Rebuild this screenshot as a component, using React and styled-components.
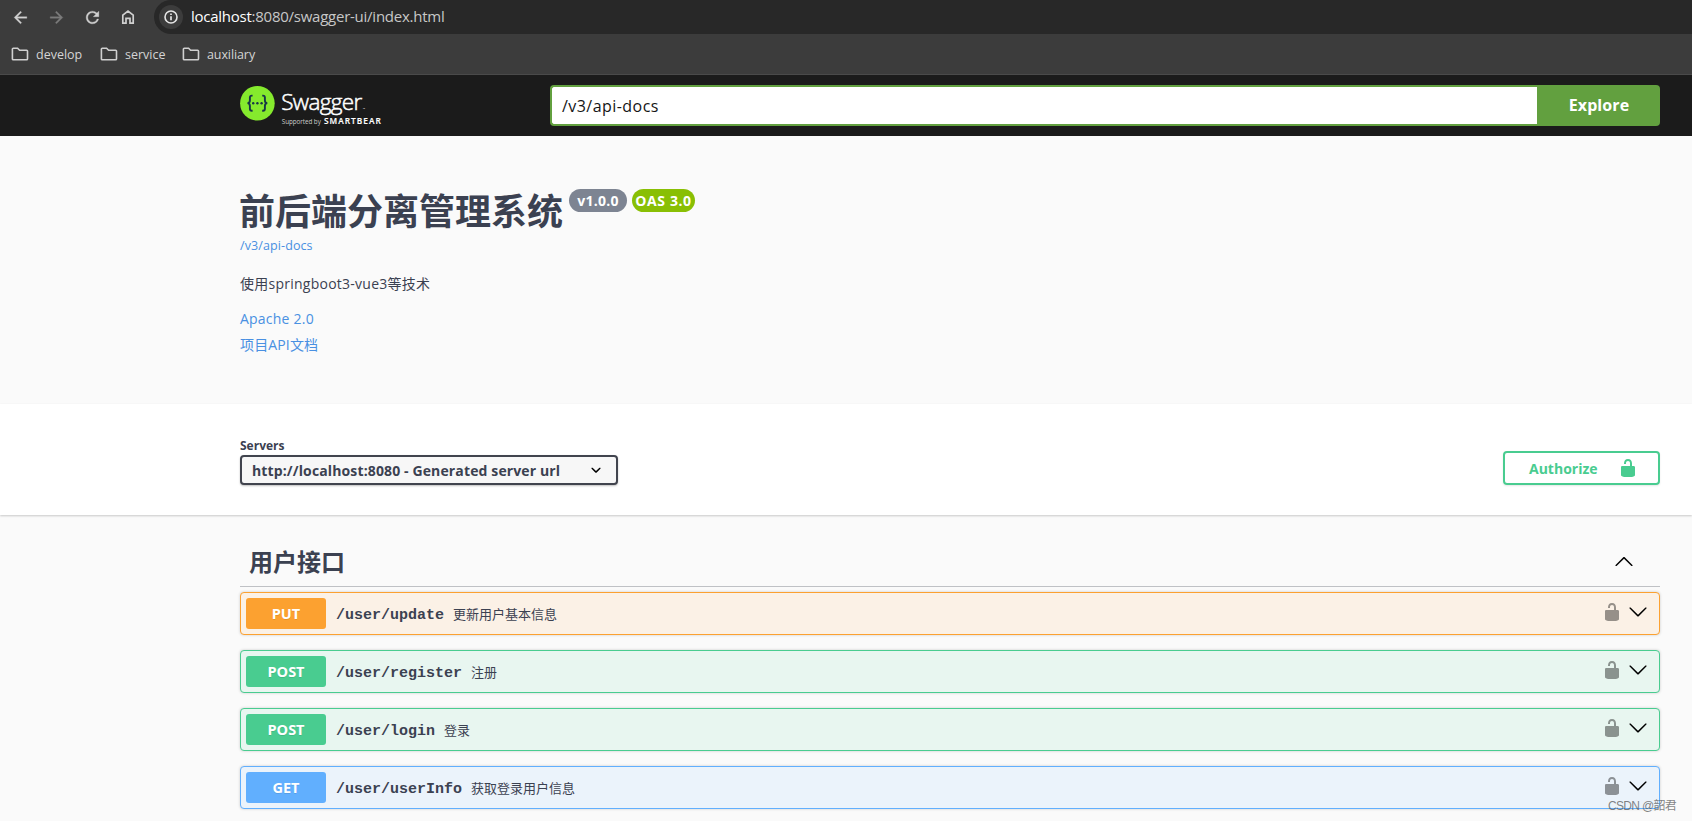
import React from "react";
import styled, { createGlobalStyle } from "styled-components";

const GlobalStyle = createGlobalStyle`
  * { box-sizing: border-box; }
  body {
    margin: 0;
    background: #fafafa;
    color: #3b4151;
    font-family: "Open Sans", "Noto Sans CJK SC", sans-serif;
    overflow: hidden;
  }
`;

const Label = styled.span`
  white-space: nowrap;
  letter-spacing: ${(p) => p.$track || 0}px;
`;

const Page = styled.div`
  position: relative;
  width: 1692px;
  height: 821px;
  overflow: hidden;
`;

/* Browser chrome */
const Browser = styled.header`
  height: 75px;
  background: #3c3c3c;
  border-bottom: 1px solid #4a4a4a;
`;
const NavBar = styled.div`
  display: flex;
  align-items: center;
  height: 34px;
  padding-left: 10px;
`;
const NavButton = styled.span`
  display: grid;
  place-items: center;
  width: 20px;
  height: 20px;
  margin-right: 16px;
  color: ${(p) => (p.$disabled ? "#7b7b7b" : "#d0d0d0")};
`;
const AddressBar = styled.div`
  display: flex;
  align-items: center;
  flex: 1;
  height: 34px;
  padding-left: 5px;
  border-radius: 17px 0 0 17px;
  background: #282828;
  color: #c7c7c7;
  font-size: 15px;
  line-height: 20px;
  b { font-weight: 400; color: #fff; }
`;
const Address = styled(Label)`
  padding-bottom: 2px;
`;
const SiteInfo = styled.span`
  display: grid;
  place-items: center;
  width: 24px;
  height: 24px;
  margin-right: 8px;
  border-radius: 50%;
  background: #3c3c3c;
`;
const Bookmarks = styled.nav`
  display: flex;
  height: 40px;
  padding-left: 11px;
`;
const Bookmark = styled.span`
  display: flex;
  align-items: center;
  gap: 7px;
  width: ${(p) => p.$w}px;
  height: 40px;
  color: #d4d4d4;
  font-size: 12.5px;
`;

/* Swagger top bar */
const Column = styled.div`
  width: 1420px;
  margin-left: 240px;
`;
const TopBar = styled.div`
  height: 61px;
  background: #1b1b1b;
`;
const TopBarInner = styled(Column)`
  display: flex;
  padding-top: 10px;
`;
const LogoLink = styled.div`
  width: 310px;
  height: 42px;
`;
const SpecInput = styled.div`
  display: flex;
  align-items: center;
  flex: 1;
  height: 41px;
  padding-left: 10px;
  border: 2px solid #62a03f;
  border-right: 0;
  border-radius: 4px 0 0 4px;
  background: #fff;
  color: #151515;
  font-size: 16px;
`;
const ExploreButton = styled.div`
  display: grid;
  place-items: center;
  width: 123px;
  height: 41px;
  padding: 0 0 2px 1px;
  border-radius: 0 4px 4px 0;
  background: #62a03f;
  color: #fff;
  font-size: 16px;
  font-weight: 700;
`;

/* Info */
const Info = styled.section`
  height: 268px;
  padding-top: 53px;
`;
const TitleRow = styled.div`
  display: flex;
  align-items: flex-start;
  height: 45px;
  margin-bottom: 2px;
`;
const Title = styled.h1`
  margin: 0 6px 0 -1px;
  font-size: 36px;
  line-height: 46px;
  font-weight: 700;
`;
const Version = styled.span`
  display: grid;
  place-items: center;
  width: ${(p) => p.$w}px;
  height: 23px;
  margin-right: 5px;
  border-radius: 12px;
  background: ${(p) => p.$bg};
  color: #fff;
  font-size: 14px;
  font-weight: 700;
`;
const InfoLine = styled.div`
  height: 20px;
  margin-bottom: ${(p) => p.$gap}px;
  line-height: 20px;
  font-size: ${(p) => p.$size || 14}px;
  color: ${(p) => (p.$link ? "#4990e2" : "#3b4151")};
`;

/* Servers */
const Scheme = styled.section`
  height: 111px;
  background: #fff;
  box-shadow: 0 1px 2px rgba(0, 0, 0, 0.2);
`;
const SchemeInner = styled(Column)`
  display: flex;
  justify-content: space-between;
  align-items: flex-end;
  height: 81px;
`;
const ServersLabel = styled.div`
  height: 16px;
  margin-bottom: 1px;
  font-size: 12px;
  line-height: 16px;
  font-weight: 700;
`;
const Select = styled.div`
  display: flex;
  align-items: center;
  justify-content: space-between;
  width: 378px;
  height: 30px;
  padding: 0 10px;
  border: 2px solid #41444e;
  border-radius: 4px;
  background: #f7f7f7;
  box-shadow: 0 1px 2px rgba(0, 0, 0, 0.25);
  font-size: 14px;
  font-weight: 700;
`;
const AuthorizeButton = styled.div`
  display: flex;
  align-items: center;
  justify-content: space-between;
  width: 157px;
  height: 34px;
  padding: 0 20px 0 24px;
  border: 2px solid #49cc90;
  border-radius: 4px;
  box-shadow: 0 1px 2px rgba(0, 0, 0, 0.1);
  color: #49cc90;
  font-size: 14px;
  font-weight: 700;
`;

/* Operations */
const TagHeader = styled.div`
  display: flex;
  align-items: center;
  justify-content: space-between;
  height: 52px;
  margin-top: 20px;
  margin-bottom: 5px;
  padding: 0 26px 0 9px;
  border-bottom: 1px solid #bfc1c5;
  color: #3b4151;
  font-size: 24px;
  font-weight: 700;
`;
const Operation = styled.div`
  display: flex;
  align-items: center;
  height: 43px;
  margin-bottom: 15px;
  padding: 0 11px 0 5px;
  border: 1px solid ${(p) => p.$color};
  border-radius: 4px;
  background: ${(p) => p.$tint};
  box-shadow: 0 0 3px rgba(0, 0, 0, 0.19);
`;
const Method = styled.span`
  display: grid;
  place-items: center;
  width: 80px;
  height: 31px;
  border-radius: 3px;
  background: ${(p) => p.$color};
  color: #fff;
  font-size: 14.5px;
  font-weight: 700;
  text-shadow: 0 1px 0 rgba(0, 0, 0, 0.1);
`;
const Path = styled.span`
  padding: 3px 9px 0 10px;
  font-family: "Liberation Mono", monospace;
  font-size: 15px;
  font-weight: 700;
`;
const Summary = styled.span`
  flex: 1;
  font-size: 13px;
`;
const RowIcons = styled.span`
  display: flex;
  align-items: center;
  gap: 6px;
  padding-bottom: 3px;
`;
const Watermark = styled.div`
  position: absolute;
  right: 16px;
  bottom: 6px;
  color: rgba(90, 90, 90, 0.75);
  font-family: "Liberation Sans", "Noto Sans CJK SC", sans-serif;
  font-size: 12px;
  letter-spacing: -0.7px;
  line-height: 18px;
`;

const Glyph = ({ size, d }) => (
  <svg width={size} height={size} viewBox="0 0 24 24" fill="currentColor" stroke="currentColor" strokeWidth=".4"><path d={d} /></svg>
);
const BACK = "M20 11H7.83l5.59-5.59L12 4l-8 8 8 8 1.41-1.41L7.83 13H20v-2z";
const FORWARD = "M12 4l-1.41 1.41L16.17 11H4v2h12.17l-5.58 5.59L12 20l8-8z";
const RELOAD = "M17.65 6.35A7.958 7.958 0 0 0 12 4c-4.42 0-7.99 3.58-7.99 8s3.57 8 7.99 8c3.73 0 6.84-2.55 7.73-6h-2.08A5.99 5.99 0 0 1 12 18c-3.31 0-6-2.69-6-6s2.69-6 6-6c1.66 0 3.14.69 4.22 1.78L13 11h7V4l-2.35 2.35z";

const HomeIcon = () => (
  <svg width="14" height="16" viewBox="0 0 14 16" fill="none" stroke="currentColor" strokeWidth="1.7">
    <path d="M1.8 6.2 7 2.1l5.2 4.1v7.9H9V9.3H5v4.8H1.8z" />
  </svg>
);
const InfoIcon = () => (
  <svg width="14" height="14" viewBox="0 0 14 14" fill="none" stroke="#e6e6e6" strokeWidth="1.6">
    <circle cx="7" cy="7" r="6" />
    <path d="M7 6.2v4M7 3.4v1.6" strokeWidth="1.7" />
  </svg>
);
const FolderIcon = () => (
  <svg width="18" height="14" viewBox="0 0 18 14" fill="none" stroke="#d0d0d0" strokeWidth="1.6">
    <path d="M1.4 11.9V2.1q0-.9.9-.9h4.3l2 2h7q.9 0 .9.9v7.8q0 .9-.9.9H2.3q-.9 0-.9-.9z" />
  </svg>
);
const LockIcon = ({ color, opacity = 1 }) => (
  <svg width="20" height="20" viewBox="0 0 20 20" fill={color} opacity={opacity}>
    <path d="M15.8 8H14V5.6C14 2.703 12.665 1 10 1 7.334 1 6 2.703 6 5.6V6h2v-.801C8 3.754 8.797 3 10 3c1.203 0 2 .754 2 2.199V8H4c-.553 0-1 .646-1 1.199V17c0 .549.428 1.139.951 1.307l1.197.387C5.672 18.861 6.55 19 7.1 19h5.8c.549 0 1.428-.139 1.951-.307l1.196-.387c.524-.167.953-.757.953-1.306V9.199C17 8.646 16.352 8 15.8 8z" />
  </svg>
);
const Chevron = ({ down }) => (
  <svg width="20" height="20" viewBox="0 0 20 20">
    <path
      transform={down ? "rotate(180 10 10.25)" : undefined}
      d="M17.418 14.908C17.69 15.176 18.127 15.176 18.397 14.908C18.667 14.64 18.668 14.207 18.397 13.939L10.489 6.109C10.219 5.841 9.782 5.841 9.51 6.109L1.602 13.939C1.332 14.207 1.332 14.64 1.602 14.908C1.873 15.176 2.311 15.176 2.581 14.908L10 7.767L17.418 14.908Z"
    />
  </svg>
);
const SelectArrow = () => (
  <svg width="20" height="20" viewBox="0 0 20 20">
    <path d="M13.418 7.859c.271-.268.709-.268.978 0 .27.268.272.701 0 .969l-3.908 3.83c-.27.268-.707.268-.979 0l-3.908-3.83c-.27-.267-.27-.701 0-.969.271-.268.709-.268.978 0L10 11l3.418-3.141z" />
  </svg>
);
const Logo = () => (
  <svg width="145" height="44" viewBox="0 0 145 44" fontFamily="Open Sans, sans-serif">
    <circle cx="17.4" cy="18.3" r="17.3" fill="#85ea2d" />
    <g fill="none" stroke="#173647" strokeWidth="1.9">
      <path d="M12.6 10.6h-.8q-1.9 0-1.9 2v2.6q0 2.8-2.4 2.9 2.4.2 2.4 2.9v2.7q0 2 1.9 2h.8" />
      <path d="M22.2 10.6h.8q1.9 0 1.9 2v2.6q0 2.8 2.4 2.9-2.4.2-2.4 2.9v2.7q0 2-1.9 2h-.8" />
    </g>
    <g fill="#173647">
      <circle cx="13.2" cy="18.2" r="1.2" />
      <circle cx="17.4" cy="18.2" r="1.2" />
      <circle cx="21.6" cy="18.2" r="1.2" />
    </g>
    <g fill="#fff">
      <text x="41.2" y="25.4" fontSize="22.5" fontWeight="300" stroke="#fff" strokeWidth=".5" textLength="81">Swagger</text>
      <text x="122.8" y="25" fontSize="3">™</text>
      <text x="41.8" y="39.2" fontSize="6.3" fill="#ccc" textLength="39">Supported by</text>
      <text x="84" y="39.4" fontSize="8.3" fontWeight="600" stroke="#fff" strokeWidth=".15" textLength="56.8" lengthAdjust="spacing">SMARTBEAR</text>
    </g>
  </svg>
);

const PUT = { color: "#fca130", tint: "#fbf1e6" };
const POST = { color: "#49cc90", tint: "#e8f6f0" };
const GET = { color: "#61affe", tint: "#ebf3fb" };
const operations = [
  { method: "PUT", theme: PUT, path: "/user/update", summary: "更新用户基本信息" },
  { method: "POST", theme: POST, path: "/user/register", summary: "注册" },
  { method: "POST", theme: POST, path: "/user/login", summary: "登录" },
  { method: "GET", theme: GET, path: "/user/userInfo", summary: "获取登录用户信息" },
];

export default function App() {
  return (
    <Page>
      <GlobalStyle />
      <Browser>
        <NavBar>
          <NavButton><Glyph size={19} d={BACK} /></NavButton>
          <NavButton $disabled><Glyph size={19} d={FORWARD} /></NavButton>
          <NavButton><Glyph size={19} d={RELOAD} /></NavButton>
          <NavButton><HomeIcon /></NavButton>
          <AddressBar>
            <SiteInfo><InfoIcon /></SiteInfo>
            <Address $track={-0.25}><b>localhost</b>:8080/swagger-ui/index.html</Address>
          </AddressBar>
        </NavBar>
        <Bookmarks>
          <Bookmark $w={89}><FolderIcon /><Label>develop</Label></Bookmark>
          <Bookmark $w={82}><FolderIcon /><Label>service</Label></Bookmark>
          <Bookmark $w={90}><FolderIcon /><Label $track={-0.1}>auxiliary</Label></Bookmark>
        </Bookmarks>
      </Browser>
      <TopBar>
        <TopBarInner>
          <LogoLink><Logo /></LogoLink>
          <SpecInput><Label $track={0.45}>/v3/api-docs</Label></SpecInput>
          <ExploreButton><Label $track={0.1}>Explore</Label></ExploreButton>
        </TopBarInner>
      </TopBar>
      <Info>
        <Column>
          <TitleRow>
            <Title>前后端分离管理系统</Title>
            <Version $w={58} $bg="#7d8492"><Label $track={0.3}>v1.0.0</Label></Version>
            <Version $w={63} $bg="#89bf04"><Label $track={0.6}>OAS 3.0</Label></Version>
          </TitleRow>
          <InfoLine $link $size={12.5} $gap={18}><Label $track={0.1}>/v3/api-docs</Label></InfoLine>
          <InfoLine $gap={15}><Label $track={0.25}>使用springboot3-vue3等技术</Label></InfoLine>
          <InfoLine $link $gap={6}><Label $track={0.22}>Apache 2.0</Label></InfoLine>
          <InfoLine $link $gap={0}><Label $track={0.15}>项目API文档</Label></InfoLine>
        </Column>
      </Info>
      <Scheme>
        <SchemeInner>
          <div>
            <ServersLabel><Label>Servers</Label></ServersLabel>
            <Select><Label $track={0.13}>http://localhost:8080 - Generated server url</Label><SelectArrow /></Select>
          </div>
          <AuthorizeButton><Label>Authorize</Label><LockIcon color="#49cc90" /></AuthorizeButton>
        </SchemeInner>
      </Scheme>
      <Column>
        <TagHeader><Label>用户接口</Label><Chevron /></TagHeader>
        {operations.map(({ method, theme, path, summary }) => (
          <Operation key={path} $color={theme.color} $tint={theme.tint}>
            <Method $color={theme.color}>{method}</Method>
            <Path>{path}</Path>
            <Summary>{summary}</Summary>
            <RowIcons><LockIcon color="#000" opacity={0.4} /><Chevron down /></RowIcons>
          </Operation>
        ))}
      </Column>
      <Watermark>CSDN @韶君</Watermark>
    </Page>
  );
}
